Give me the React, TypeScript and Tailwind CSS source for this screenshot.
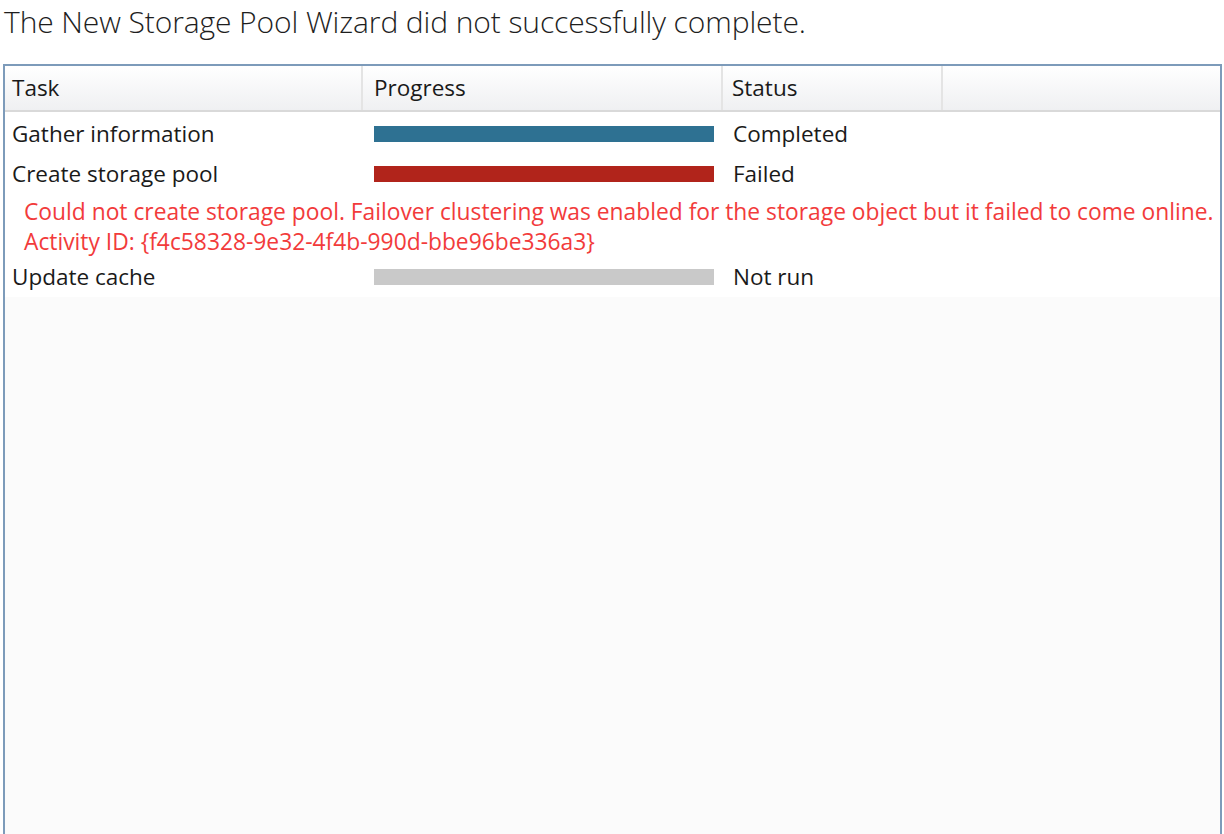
import React from "react";

type Task = {
  name: string;
  status: string;
  bar: string;
  error?: string[];
};

const tasks: Task[] = [
  { name: "Gather information", status: "Completed", bar: "bg-[#2e7192]" },
  {
    name: "Create storage pool",
    status: "Failed",
    bar: "bg-[#b1241b]",
    error: [
      "Could not create storage pool. Failover clustering was enabled for the storage object but it failed to come online.",
      "Activity ID: {f4c58328-9e32-4f4b-990d-bbe96be336a3}",
    ],
  },
  { name: "Update cache", status: "Not run", bar: "bg-[#c9c9c9]" },
];

export default function App() {
  return (
    <div
      className="h-[834px] w-[1224px] overflow-hidden bg-white flex flex-col text-[#1a1a1a]"
      style={{ fontFamily: '"Open Sans", "Noto Sans", sans-serif' }}
    >
      <h1 className="h-[64px] pl-[4px] pt-[1px] text-[30px] font-light leading-[42px] text-[#1e1e1e] whitespace-nowrap tracking-[-0.1px]">
        The New Storage Pool Wizard did not successfully complete.
      </h1>

      <div className="flex-1 ml-[3px] mr-[2px] border-x-2 border-t-2 border-[#7d9bba] bg-[#fbfbfb] flex flex-col">
        {/* header */}
        <div className="flex h-[46px] bg-gradient-to-b from-white to-[#eff0f2] border-b-2 border-[#d9d9d9] text-[22.5px]">
          <div className="w-[358px] pl-[7px] flex items-center border-r-2 border-[#e4e4e4]">Task</div>
          <div className="w-[360px] pl-[11px] flex items-center border-r-2 border-[#e4e4e4]">Progress</div>
          <div className="w-[220px] pl-[9px] flex items-center border-r-2 border-[#e4e4e4]">Status</div>
          <div className="flex-1" />
        </div>

        {/* rows */}
        <div className="bg-white pt-[2px] text-[22.5px]">
          {tasks.map((t) => (
            <div key={t.name}>
              <div className="flex items-center h-[40px]">
                <div className="w-[360px] pl-[7px] whitespace-nowrap">{t.name}</div>
                <div className="w-[360px] pl-[9px]">
                  <div className={`h-[16px] w-[340px] ${t.bar}`} />
                </div>
                <div className="pl-[8px] whitespace-nowrap">{t.status}</div>
              </div>
              {t.error && (
                <div className="pl-[19px] text-[#f23b3b] text-[22.8px] leading-[30px] mt-[3px] whitespace-nowrap">
                  {t.error.map((line) => (
                    <div key={line}>{line}</div>
                  ))}
                </div>
              )}
            </div>
          ))}
        </div>
      </div>
    </div>
  );
}
